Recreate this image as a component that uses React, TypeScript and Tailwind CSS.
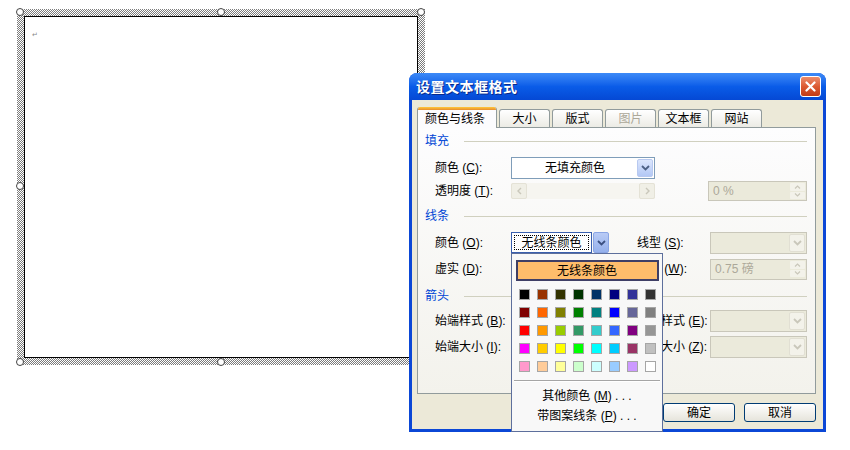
import React from "react";

// Office standard line colour palette, 5 rows x 8
const palette: string[][] = [
  ["#000000", "#993300", "#333300", "#003300", "#003366", "#000080", "#333399", "#333333"],
  ["#800000", "#FF6600", "#808000", "#008000", "#008080", "#0000FF", "#666699", "#808080"],
  ["#FF0000", "#FF9900", "#99CC00", "#339966", "#33CCCC", "#3366FF", "#800080", "#969696"],
  ["#FF00FF", "#FFCC00", "#FFFF00", "#00FF00", "#00FFFF", "#00CCFF", "#993366", "#C0C0C0"],
  ["#FF99CC", "#FFCC99", "#FFFF99", "#CCFFCC", "#CCFFFF", "#99CCFF", "#CC99FF", "#FFFFFF"],
];

const handles = [
  "left-[-1px] top-[-1px]",
  "left-[200px] top-[-1px]",
  "left-[400px] top-[-1px]",
  "left-[-1px] top-[173px]",
  "left-[400px] top-[173px]",
  "left-[-1px] top-[349px]",
  "left-[200px] top-[349px]",
  "left-[400px] top-[349px]",
];

const Chevron = ({ color = "#4d6185" }: { color?: string }) => (
  <svg width="9" height="6" viewBox="0 0 9 6">
    <path d="M1 1 L4.5 4.5 L8 1" fill="none" stroke={color} strokeWidth="1.8" />
  </svg>
);

const Key = ({ text, k, className = "" }: { text: string; k: string; className?: string }) => (
  <span className={"whitespace-nowrap " + className}>
    {text} (<u>{k}</u>):
  </span>
);

const SectionHeader = ({ title }: { title: string }) => (
  <div className="flex items-center h-[16px]">
    <span className="text-[#0046d5] w-[24px] whitespace-nowrap">{title}</span>
    <div className="flex-1 h-px bg-[#d0d0bf] ml-[15px] mr-[8px]" />
  </div>
);

const DisabledCombo = () => (
  <div className="w-[97px] h-[22px] border border-[#c9c7ba] bg-[#ebeadb] flex justify-end p-px">
    <div className="w-[16px] h-full rounded-[2px] bg-[#f3f2ea] border border-[#e1dfd3] flex items-center justify-center">
      <Chevron color="#c9c7ba" />
    </div>
  </div>
);

const DisabledSpin = ({ text, w }: { text: string; w: string }) => (
  <div className={"h-[20px] border border-[#c9c7ba] bg-[#ebeadb] flex items-center justify-between pl-[4px] pr-px " + w}>
    <span className="text-[#aca899]">{text}</span>
    <div className="w-[15px] h-[16px] flex flex-col gap-px">
      <div className="flex-1 bg-[#f3f2ea] rounded-[1px] flex items-center justify-center">
        <svg width="7" height="4" viewBox="0 0 7 4"><path d="M1 3.5 L3.5 1 L6 3.5" fill="none" stroke="#c9c7ba" strokeWidth="1.2" /></svg>
      </div>
      <div className="flex-1 bg-[#f3f2ea] rounded-[1px] flex items-center justify-center">
        <svg width="7" height="4" viewBox="0 0 7 4"><path d="M1 0.5 L3.5 3 L6 0.5" fill="none" stroke="#c9c7ba" strokeWidth="1.2" /></svg>
      </div>
    </div>
  </div>
);

const XPButton = ({ label }: { label: string }) => (
  <div className="w-[72px] h-[19px] rounded-[3px] border border-[#003c74] bg-linear-to-b from-white to-[#e6e4db] flex items-center justify-center">
    {label}
  </div>
);

export default function App() {
  return (
    <div className="relative w-[850px] h-[450px] bg-white overflow-hidden text-[12px] leading-none text-black font-['Liberation_Sans','Noto_Sans_CJK_SC',sans-serif]">
      {/* selected text box on the page */}
      <div className="absolute left-[17px] top-[9px] w-[408px] h-[356px] p-[7px] bg-[repeating-conic-gradient(#7c7c7c_0%_25%,#ffffff_0%_50%)] bg-size-[2px_2px]">
        <div className="w-full h-full bg-white border border-black pl-[7px] pt-[10px]">
          <span className="text-[7px] text-[#888]">↵</span>
        </div>
        {handles.map((h) => (
          <div key={h} className={"absolute w-[8px] h-[8px] rounded-full border border-[#444] bg-white " + h} />
        ))}
      </div>

      {/* dialog window */}
      <div className="absolute left-[409px] top-[73px] w-[417px] h-[359px] rounded-t-[8px] bg-[#0b47d6] px-[3px] pb-[3px] flex flex-col">
        <div className="h-[27px] -mx-[3px] rounded-t-[8px] bg-linear-to-b from-[#3d8af7] via-[#0a5ce8] to-[#0548d4] flex items-center justify-between pl-[7px] pr-[5px]">
          <span className="text-white font-bold text-[14px] tracking-[0.5px] [text-shadow:1px_1px_0_#0a2a8a]">设置文本框格式</span>
          <div className="w-[21px] h-[21px] rounded-[3px] border border-white bg-linear-to-b from-[#eb8c6c] via-[#dc5a32] to-[#c23a14] flex items-center justify-center">
            <svg width="11" height="11" viewBox="0 0 11 11">
              <path d="M1.5 1.5 L9.5 9.5 M9.5 1.5 L1.5 9.5" stroke="white" strokeWidth="2.2" strokeLinecap="round" />
            </svg>
          </div>
        </div>

        <div className="flex-1 bg-[#ece9d8] pt-[7px] pl-[5px] flex flex-col">
          {/* tabs */}
          <div className="flex items-end h-[20px] relative z-10">
            <div className="w-[80px] h-[21px] -mb-px bg-[#fcfcfe] border-x border-[#919b9c] rounded-t-[3px] flex flex-col overflow-hidden">
              <div className="h-[3px] bg-linear-to-b from-[#ffc83c] to-[#e68b2c]" />
              <div className="flex-1 flex items-center pl-[7px]">颜色与线条</div>
            </div>
            {["大小", "版式", "图片", "文本框", "网站"].map((t) => (
              <div
                key={t}
                className={
                  "ml-[2px] w-[51px] h-[18px] border border-b-0 border-[#919b9c] rounded-t-[3px] bg-linear-to-b from-white to-[#ecebe5] flex items-center justify-center " +
                  (t === "图片" ? "text-[#aca899]" : "")
                }
              >
                {t}
              </div>
            ))}
          </div>

          {/* tab panel */}
          <div className="w-[399px] h-[267px] border border-[#919b9c] bg-linear-to-b from-[#fdfdfe] to-[#f3f2ec] pl-[7px] pt-[5px] flex flex-col">
            <SectionHeader title="填充" />
            <div className="mt-[7px] h-[23px] flex items-center pl-[10px]">
              <Key text="颜色" k="C" className="w-[76px]" />
              <div className="w-[144px] h-[22px] border border-[#7f9db9] bg-white flex p-px">
                <div className="flex-1 flex items-center justify-center">无填充颜色</div>
                <div className="w-[16px] h-full rounded-[2px] bg-linear-to-b from-[#dce6fd] to-[#b3c8f5] border border-[#b8c9f0] flex items-center justify-center">
                  <Chevron />
                </div>
              </div>
            </div>
            <div className="h-[24px] flex items-center pl-[10px]">
              <Key text="透明度" k="T" className="w-[76px]" />
              <div className="w-[144px] h-[16px] bg-[#f6f5f0] flex justify-between">
                <div className="w-[16px] h-full rounded-[2px] border border-[#e4e2d6] bg-[#f0efe6] flex items-center justify-center">
                  <svg width="5" height="8" viewBox="0 0 5 8"><path d="M4 1 L1 4 L4 7" fill="none" stroke="#c9c7ba" strokeWidth="1.4" /></svg>
                </div>
                <div className="w-[16px] h-full rounded-[2px] border border-[#e4e2d6] bg-[#f0efe6] flex items-center justify-center">
                  <svg width="5" height="8" viewBox="0 0 5 8"><path d="M1 1 L4 4 L1 7" fill="none" stroke="#c9c7ba" strokeWidth="1.4" /></svg>
                </div>
              </div>
              <DisabledSpin text="0 %" w="ml-[53px] w-[99px]" />
            </div>

            <div className="mt-[5px]">
              <SectionHeader title="线条" />
            </div>
            <div className="mt-[7px] h-[23px] flex items-center pl-[10px]">
              <Key text="颜色" k="O" className="w-[76px]" />
              <div className="w-[81px] h-[21px] border border-[#3a5fae] bg-white p-[2px]">
                <div className="w-full h-full border border-dotted border-black flex items-center justify-center">无线条颜色</div>
              </div>
              <div className="w-[16px] h-[21px] ml-px rounded-[2px] bg-linear-to-b from-[#b9cbf5] to-[#95b0ec] border border-[#8aa5e4] flex items-center justify-center">
                <Chevron color="#3b4f80" />
              </div>
              <Key text="线型" k="S" className="ml-[28px] w-[73px]" />
              <DisabledCombo />
            </div>
            <div className="mt-[3px] h-[24px] flex items-center pl-[10px]">
              <Key text="虚实" k="D" className="w-[76px]" />
              <div className="w-[126px]" />
              <Key text="粗细" k="W" className="w-[73px]" />
              <DisabledSpin text="0.75 磅" w="w-[97px] h-[21px]" />
            </div>

            <div className="mt-[7px]">
              <SectionHeader title="箭头" />
            </div>
            <div className="mt-[5px] h-[24px] flex items-center pl-[10px]">
              <Key text="始端样式" k="B" className="w-[76px]" />
              <div className="w-[126px]" />
              <Key text="末端样式" k="E" className="w-[73px]" />
              <DisabledCombo />
            </div>
            <div className="mt-[2px] h-[24px] flex items-center pl-[10px]">
              <Key text="始端大小" k="I" className="w-[76px]" />
              <div className="w-[126px]" />
              <Key text="末端大小" k="Z" className="w-[73px]" />
              <DisabledCombo />
            </div>
          </div>

          <div className="mt-[9px] w-[399px] flex justify-end gap-[9px]">
            <XPButton label="确定" />
            <XPButton label="取消" />
          </div>
        </div>
      </div>

      {/* colour drop-down, open over the dialog */}
      <div className="absolute left-[511px] top-[253px] w-[152px] h-[179px] border border-[#5d6f9c] bg-[#f8f8f8] flex flex-col items-center">
        <div className="mt-[6px] w-[143px] h-[21px] border-[2px] border-[#3f3f66] bg-[#ffbd6b] flex items-center justify-center">
          无线条颜色
        </div>
        <div className="mt-[8px] grid grid-cols-8 gap-[7px]">
          {palette.flat().map((c, i) => (
            <div key={i} className="w-[11px] h-[11px] border border-[#a6a6a6]" style={{ backgroundColor: c }} />
          ))}
        </div>
        <div className="mt-[8px] w-[146px] h-[2px] border-t border-[#a5a5a5] border-b border-b-white" />
        <div className="mt-[4px] h-[20px] flex items-center">
          其他颜色 (<u>M</u>) . . .
        </div>
        <div className="h-[20px] flex items-center">
          带图案线条 (<u>P</u>) . . .
        </div>
      </div>
    </div>
  );
}
